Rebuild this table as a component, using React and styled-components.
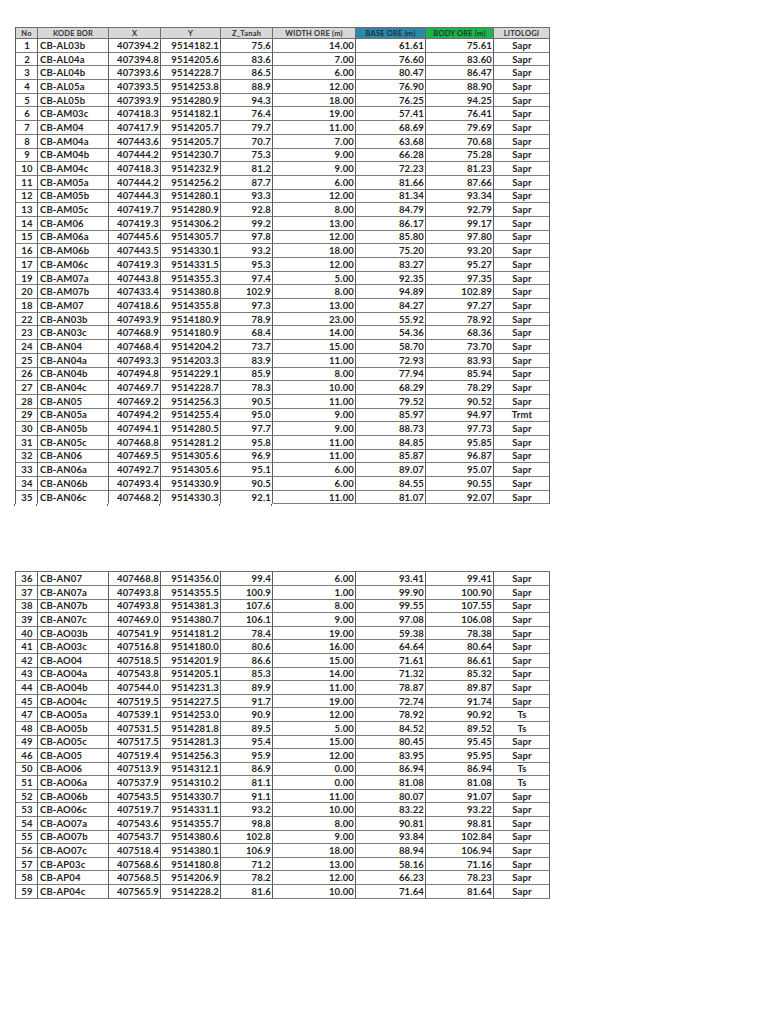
import React from "react";
import styled, { createGlobalStyle } from "styled-components";

const Global = createGlobalStyle`
  html, body { margin: 0; padding: 0; background: #ffffff; }
  body { font-family: Lato, "Open Sans", sans-serif; color: #2b2b2b; }
  * { box-sizing: border-box; }
`;

const Page = styled.div`
  width: 768px;
  min-height: 1024px;
  padding: 27px 0 0 15px;
  display: flex;
  flex-direction: column;
  gap: 65px;
`;

const Sheet = styled.div`
  width: 535px;
  border-left: 1px solid #5e5e5e;
  border-top: 1px solid #6f6f6f;
  font-family: Lato, "Open Sans", sans-serif;
  font-weight: 700;
`;

const GRID = "22px 71px 52px 60px 52px 83px 70px 68px 56px";

const HeaderRow = styled.div`
  display: grid;
  grid-template-columns: ${GRID};
  height: 11px;
`;

const HeadCell = styled.div`
  display: flex;
  align-items: center;
  justify-content: center;
  font-size: 7.5px;
  font-weight: 700;
  letter-spacing: 0.2px;
  white-space: nowrap;
  overflow: hidden;
  color: ${(p) => p.$fg || "#333"};
  background: ${(p) => p.$bg || "#d8d8d8"};
  border-right: 1px solid #6f6f6f;
  border-bottom: 1px solid #6f6f6f;
`;

const Row = styled.div`
  display: grid;
  grid-template-columns: ${GRID};
  height: ${(p) => p.$h}px;
`;

const Cell = styled.div`
  display: flex;
  align-items: center;
  justify-content: ${(p) =>
    p.$align === "left" ? "flex-start" : p.$align === "center" ? "center" : "flex-end"};
  padding: 0 1px 0 2px;
  font-size: 9.5px;
  color: #232323;
  white-space: nowrap;
  overflow: hidden;
  letter-spacing: 0.15px;
  border-right: 1px solid #5e5e5e;
  border-bottom: 1px solid ${(p) => (p.$open ? "transparent" : "#7d7d7d")};
`;

const BottomRule = styled.div`
  display: grid;
  grid-template-columns: ${GRID};
  height: 2px;
  margin-left: -1px;
`;

const RuleSeg = styled.div`
  border-left: 1px solid #5e5e5e;
`;

const table1 = [
  ["1", "CB-AL03b", "407394.2", "9514182.1", "75.6", "14.00", "61.61", "75.61", "Sapr"],
  ["2", "CB-AL04a", "407394.8", "9514205.6", "83.6", "7.00", "76.60", "83.60", "Sapr"],
  ["3", "CB-AL04b", "407393.6", "9514228.7", "86.5", "6.00", "80.47", "86.47", "Sapr"],
  ["4", "CB-AL05a", "407393.5", "9514253.8", "88.9", "12.00", "76.90", "88.90", "Sapr"],
  ["5", "CB-AL05b", "407393.9", "9514280.9", "94.3", "18.00", "76.25", "94.25", "Sapr"],
  ["6", "CB-AM03c", "407418.3", "9514182.1", "76.4", "19.00", "57.41", "76.41", "Sapr"],
  ["7", "CB-AM04", "407417.9", "9514205.7", "79.7", "11.00", "68.69", "79.69", "Sapr"],
  ["8", "CB-AM04a", "407443.6", "9514205.7", "70.7", "7.00", "63.68", "70.68", "Sapr"],
  ["9", "CB-AM04b", "407444.2", "9514230.7", "75.3", "9.00", "66.28", "75.28", "Sapr"],
  ["10", "CB-AM04c", "407418.3", "9514232.9", "81.2", "9.00", "72.23", "81.23", "Sapr"],
  ["11", "CB-AM05a", "407444.2", "9514256.2", "87.7", "6.00", "81.66", "87.66", "Sapr"],
  ["12", "CB-AM05b", "407444.3", "9514280.1", "93.3", "12.00", "81.34", "93.34", "Sapr"],
  ["13", "CB-AM05c", "407419.7", "9514280.9", "92.8", "8.00", "84.79", "92.79", "Sapr"],
  ["14", "CB-AM06", "407419.3", "9514306.2", "99.2", "13.00", "86.17", "99.17", "Sapr"],
  ["15", "CB-AM06a", "407445.6", "9514305.7", "97.8", "12.00", "85.80", "97.80", "Sapr"],
  ["16", "CB-AM06b", "407443.5", "9514330.1", "93.2", "18.00", "75.20", "93.20", "Sapr"],
  ["17", "CB-AM06c", "407419.3", "9514331.5", "95.3", "12.00", "83.27", "95.27", "Sapr"],
  ["19", "CB-AM07a", "407443.8", "9514355.3", "97.4", "5.00", "92.35", "97.35", "Sapr"],
  ["20", "CB-AM07b", "407433.4", "9514380.8", "102.9", "8.00", "94.89", "102.89", "Sapr"],
  ["18", "CB-AM07", "407418.6", "9514355.8", "97.3", "13.00", "84.27", "97.27", "Sapr"],
  ["22", "CB-AN03b", "407493.9", "9514180.9", "78.9", "23.00", "55.92", "78.92", "Sapr"],
  ["23", "CB-AN03c", "407468.9", "9514180.9", "68.4", "14.00", "54.36", "68.36", "Sapr"],
  ["24", "CB-AN04", "407468.4", "9514204.2", "73.7", "15.00", "58.70", "73.70", "Sapr"],
  ["25", "CB-AN04a", "407493.3", "9514203.3", "83.9", "11.00", "72.93", "83.93", "Sapr"],
  ["26", "CB-AN04b", "407494.8", "9514229.1", "85.9", "8.00", "77.94", "85.94", "Sapr"],
  ["27", "CB-AN04c", "407469.7", "9514228.7", "78.3", "10.00", "68.29", "78.29", "Sapr"],
  ["28", "CB-AN05", "407469.2", "9514256.3", "90.5", "11.00", "79.52", "90.52", "Sapr"],
  ["29", "CB-AN05a", "407494.2", "9514255.4", "95.0", "9.00", "85.97", "94.97", "Trmt"],
  ["30", "CB-AN05b", "407494.1", "9514280.5", "97.7", "9.00", "88.73", "97.73", "Sapr"],
  ["31", "CB-AN05c", "407468.8", "9514281.2", "95.8", "11.00", "84.85", "95.85", "Sapr"],
  ["32", "CB-AN06", "407469.5", "9514305.6", "96.9", "11.00", "85.87", "96.87", "Sapr"],
  ["33", "CB-AN06a", "407492.7", "9514305.6", "95.1", "6.00", "89.07", "95.07", "Sapr"],
  ["34", "CB-AN06b", "407493.4", "9514330.9", "90.5", "6.00", "84.55", "90.55", "Sapr"],
  ["35", "CB-AN06c", "407468.2", "9514330.3", "92.1", "11.00", "81.07", "92.07", "Sapr"],
];

const table2 = [
  ["36", "CB-AN07", "407468.8", "9514356.0", "99.4", "6.00", "93.41", "99.41", "Sapr"],
  ["37", "CB-AN07a", "407493.8", "9514355.5", "100.9", "1.00", "99.90", "100.90", "Sapr"],
  ["38", "CB-AN07b", "407493.8", "9514381.3", "107.6", "8.00", "99.55", "107.55", "Sapr"],
  ["39", "CB-AN07c", "407469.0", "9514380.7", "106.1", "9.00", "97.08", "106.08", "Sapr"],
  ["40", "CB-AO03b", "407541.9", "9514181.2", "78.4", "19.00", "59.38", "78.38", "Sapr"],
  ["41", "CB-AO03c", "407516.8", "9514180.0", "80.6", "16.00", "64.64", "80.64", "Sapr"],
  ["42", "CB-AO04", "407518.5", "9514201.9", "86.6", "15.00", "71.61", "86.61", "Sapr"],
  ["43", "CB-AO04a", "407543.8", "9514205.1", "85.3", "14.00", "71.32", "85.32", "Sapr"],
  ["44", "CB-AO04b", "407544.0", "9514231.3", "89.9", "11.00", "78.87", "89.87", "Sapr"],
  ["45", "CB-AO04c", "407519.5", "9514227.5", "91.7", "19.00", "72.74", "91.74", "Sapr"],
  ["47", "CB-AO05a", "407539.1", "9514253.0", "90.9", "12.00", "78.92", "90.92", "Ts"],
  ["48", "CB-AO05b", "407531.5", "9514281.8", "89.5", "5.00", "84.52", "89.52", "Ts"],
  ["49", "CB-AO05c", "407517.5", "9514281.3", "95.4", "15.00", "80.45", "95.45", "Sapr"],
  ["46", "CB-AO05", "407519.4", "9514256.3", "95.9", "12.00", "83.95", "95.95", "Sapr"],
  ["50", "CB-AO06", "407513.9", "9514312.1", "86.9", "0.00", "86.94", "86.94", "Ts"],
  ["51", "CB-AO06a", "407537.9", "9514310.2", "81.1", "0.00", "81.08", "81.08", "Ts"],
  ["52", "CB-AO06b", "407543.5", "9514330.7", "91.1", "11.00", "80.07", "91.07", "Sapr"],
  ["53", "CB-AO06c", "407519.7", "9514331.1", "93.2", "10.00", "83.22", "93.22", "Sapr"],
  ["54", "CB-AO07a", "407543.6", "9514355.7", "98.8", "8.00", "90.81", "98.81", "Sapr"],
  ["55", "CB-AO07b", "407543.7", "9514380.6", "102.8", "9.00", "93.84", "102.84", "Sapr"],
  ["56", "CB-AO07c", "407518.4", "9514380.1", "106.9", "18.00", "88.94", "106.94", "Sapr"],
  ["57", "CB-AP03c", "407568.6", "9514180.8", "71.2", "13.00", "58.16", "71.16", "Sapr"],
  ["58", "CB-AP04", "407568.5", "9514206.9", "78.2", "12.00", "66.23", "78.23", "Sapr"],
  ["59", "CB-AP04c", "407565.9", "9514228.2", "81.6", "10.00", "71.64", "81.64", "Sapr"],
];

const headers = [
  { t: "No" },
  { t: "KODE BOR" },
  { t: "X" },
  { t: "Y" },
  { t: "Z_Tanah" },
  { t: "WIDTH ORE (m)" },
  { t: "BASE ORE (m)", bg: "#2f88a6", fg: "#1d2f45" },
  { t: "BODY ORE (m)", bg: "#1db34f", fg: "#1b3d22" },
  { t: "LITOLOGI" },
];

const aligns = ["center", "left", "right", "right", "right", "right", "right", "right", "center"];

function DataTable({ rows, header, rowH, openLast }) {
  return (
    <div>
      <Sheet>
        {header && (
          <HeaderRow>
            {headers.map((h) => (
              <HeadCell key={h.t} $bg={h.bg} $fg={h.fg}>
                {h.t}
              </HeadCell>
            ))}
          </HeaderRow>
        )}
        {rows.map((r, ri) => {
          const last = ri === rows.length - 1;
          return (
            <Row key={r[0] + r[1]} $h={rowH}>
              {r.map((v, ci) => (
                <Cell key={ci} $align={aligns[ci]} $open={openLast && last && ci < 5}>
                  {v}
                </Cell>
              ))}
            </Row>
          );
        })}
      </Sheet>
      {openLast && (
        <BottomRule>
          {[0, 1, 2, 3, 4, 5].map((i) => (
            <RuleSeg key={i} />
          ))}
        </BottomRule>
      )}
    </div>
  );
}

export default function App() {
  return (
    <>
      <Global />
      <Page>
        <DataTable rows={table1} header rowH={13.7} openLast />
        <DataTable rows={table2} rowH={13.6} />
      </Page>
    </>
  );
}
